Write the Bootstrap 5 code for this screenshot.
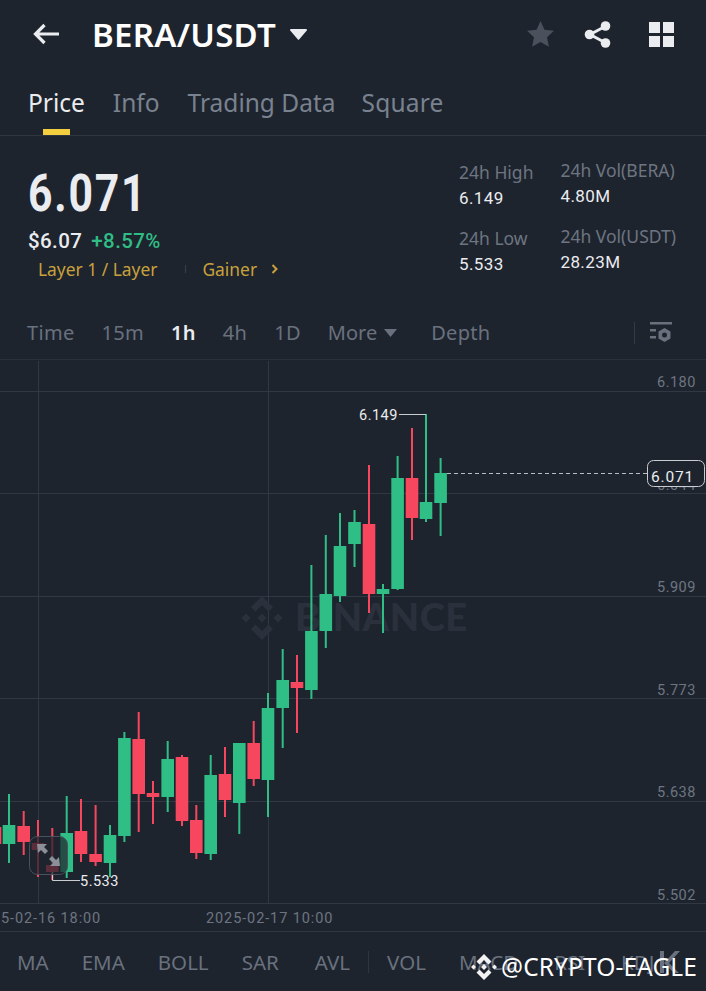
<!DOCTYPE html>
<html lang="en">
<head>
  <meta charset="UTF-8">
  <meta name="viewport" content="width=device-width, initial-scale=1.0">
  <title>BERA/USDT</title>
  <link href="https://cdn.jsdelivr.net/npm/bootstrap@5.3.0/dist/css/bootstrap.min.css" rel="stylesheet">
  <style>
    body { background: #1e242e; font-family: "Noto Sans", sans-serif; color: #eaecef; }
    .screen { position: relative; width: 706px; height: 991px; overflow: hidden; background: #1e242e; }
    .top-bar { height: 70px; padding: 0 32px 2px 33px; }
    .pair-name { font-size: 33px; font-weight: 600; line-height: 1; margin-left: 32px; color: #fff; letter-spacing: .3px; }
    .pair-caret { margin-left: 14px; }
    .top-icons { gap: 0; }
    .share-ico { margin: 0 38px 0 30px; }
    .tab-bar { height: 66px; gap: 28px; padding: 0 28px 0; border-bottom: 1px solid #2f3640; font-size: 24.5px; color: #79828f; }
    .tab-item { position: relative; line-height: 66px; }
    .tab-item:last-child { margin-left: -2px; letter-spacing: .2px; }
    .tab-item.on { color: #eaecef; }
    .tab-item.on::after { content: ""; position: absolute; left: 15px; bottom: 0; width: 27px; height: 6px; background: #f3cf3f; }
    .stats { height: 159px; padding: 0 28px; }
    .big-price { font-family: Roboto, sans-serif; font-size: 52px; font-weight: 700; line-height: 1; letter-spacing: 2.2px; margin-top: 32px; color: #eaecef; transform: scaleX(.82); transform-origin: left center; }
    .sub-price { font-family: Roboto, sans-serif; font-size: 20.5px; font-weight: 500; line-height: 24px; margin-top: 9px; letter-spacing: .4px; }
    .up-text { color: #2fbd85; margin-left: 9px; }
    .tag-row { font-size: 17.4px; line-height: 22px; color: #c8a13c; margin-left: 10px; margin-top: 5px; }
    .tag-sep { width: 1px; height: 8px; background: #3a4048; margin: 0 16px 0 28px; }
    .arrow-tag { margin-left: 14px; }
    .stat-cols { width: 219px; gap: 27px; margin-top: 21px; margin-left: auto; }
    .stat-label { font-size: 17.5px; line-height: 26px; color: #6d7581; }
    .stat-value { font-family: Roboto, sans-serif; font-size: 17px; line-height: 26px; font-weight: 400; margin-bottom: 14px; letter-spacing: .4px; }
    .shift-down { padding-top: 2px; }
    .time-bar { height: 65px; padding: 12px 34px 0 27px; border-bottom: 1px solid #2a303a; font-size: 20px; color: #69717e; letter-spacing: .3px; }
    .time-bar span.on { color: #eaecef; font-weight: 600; }
    .bar-sep { width: 1px; height: 22px; background: #343b45; margin-left: auto; margin-right: -12px; }
    .more-label { letter-spacing: 0; }
    .more-caret { margin-left: -1px; }
    .depth-label { margin-left: 7px; }
    .chart-box { display: block; }
    .axis-txt { font-family: Roboto, sans-serif; font-size: 14.5px; fill: #6d7581; letter-spacing: .5px; }
    .date-txt { letter-spacing: .9px; }
    .mark-txt { font-family: Roboto, sans-serif; font-size: 14.5px; fill: #eaecef; letter-spacing: .5px; }
    .last-txt { font-size: 15.5px; letter-spacing: .8px; }
    .brand-mark { font-family: Lato, sans-serif; font-weight: 900; font-size: 38px; fill: #2b313c; letter-spacing: .5px; }
    .ind-bar { height: 60px; padding: 1px 0 0 17px; gap: 33px; border-top: 1px solid #2f3640; font-size: 20.5px; color: #69717e; }
    .ind-sep { width: 1px; height: 22px; background: #2f3640; margin: 0 -15px; }
    .nudge { margin-left: 3px; }
    .kline-ico { margin-left: -27px; }
    .credit { position: absolute; left: 470px; top: 950px; color: #fff; font-family: "Noto Sans", sans-serif; font-size: 24.5px; line-height: 34px; letter-spacing: .1px; }
    .credit svg { margin-right: 3px; }
  </style>
</head>
<body>
  <div class="screen">
    <div class="top-bar d-flex align-items-center">
      <svg width="27" height="22" viewBox="0 0 27 22"><path d="M26 11H3M11.500 2 2.500 11l9 9" fill="none" stroke="#eaecef" stroke-width="3.200"/></svg>
      <span class="pair-name">BERA/USDT</span>
      <svg class="pair-caret" width="17" height="11" viewBox="0 0 17 11"><path d="M1 0h15a1 1 0 0 1 .8 1.600L9.300 10.300a1 1 0 0 1-1.600 0L.2 1.600A1 1 0 0 1 1 0z" fill="#eaecef"/></svg>
      <div class="ms-auto d-flex align-items-center top-icons">
        <svg width="27" height="26" viewBox="0 0 27 26"><path d="M13.500 0l4 8.700 9.500 1.100-7 6.500 1.900 9.400-8.400-4.700-8.400 4.700L7 16.300 0 9.800l9.500-1.100z" fill="#4a505c"/></svg>
        <svg class="share-ico" width="27" height="27" viewBox="0 0 27 27"><path d="M21 5.500 6 13.500l15 8" fill="none" stroke="#eaecef" stroke-width="3"/><circle cx="21.500" cy="5" r="4.800" fill="#eaecef"/><circle cx="5.500" cy="13.500" r="4.800" fill="#eaecef"/><circle cx="21.500" cy="22" r="4.800" fill="#eaecef"/></svg>
        <svg width="25" height="25" viewBox="0 0 25 25" fill="#eaecef"><rect width="11" height="11"/><rect x="14" width="11" height="11"/><rect y="14" width="11" height="11"/><rect x="14" y="14" width="11" height="11"/></svg>
      </div>
    </div>

    <div class="tab-bar d-flex">
      <span class="tab-item on">Price</span>
      <span class="tab-item">Info</span>
      <span class="tab-item">Trading Data</span>
      <span class="tab-item">Square</span>
    </div>

    <div class="stats d-flex">
      <div>
        <div class="big-price">6.071</div>
        <div class="sub-price">$6.07<span class="up-text">+8.57%</span></div>
        <div class="tag-row d-flex align-items-center">
          <span>Layer 1 / Layer</span>
          <span class="tag-sep"></span>
          <span>Gainer</span>
          <svg class="arrow-tag" width="7" height="10" viewBox="0 0 7 10"><path d="M1.500 1l4 4-4 4" fill="none" stroke="#c8a13c" stroke-width="2"/></svg>
        </div>
      </div>
      <div class="stat-cols d-flex">
        <div class="shift-down">
          <div class="stat-label">24h High</div>
          <div class="stat-value">6.149</div>
          <div class="stat-label">24h Low</div>
          <div class="stat-value">5.533</div>
        </div>
        <div>
          <div class="stat-label">24h Vol(BERA)</div>
          <div class="stat-value">4.80M</div>
          <div class="stat-label">24h Vol(USDT)</div>
          <div class="stat-value">28.23M</div>
        </div>
      </div>
    </div>

    <div class="time-bar d-flex align-items-center" style="gap: 27px">
      <span>Time</span><span>15m</span><span class="on">1h</span><span>4h</span><span>1D</span>
      <span class="d-flex align-items-center gap-2 more-label">More <svg class="more-caret" width="13" height="8" viewBox="0 0 13 8"><path d="M0 0h13L6.500 8z" fill="#69717e"/></svg></span>
      <span class="depth-label">Depth</span>
      <span class="bar-sep"></span>
      <svg width="22" height="22" viewBox="0 0 22 22" fill="#69717e"><rect width="22" height="2.500"/><rect y="7" width="6" height="2.500"/><rect y="14" width="6" height="2.500"/><path d="M14.500 6l6 3.500v7l-6 3.500-6-3.500v-7zM14.500 10.500a2.500 2.500 0 1 0 0 5 2.500 2.500 0 0 0 0-5z" fill-rule="evenodd"/></svg>
    </div>

    <svg id="chart" class="chart-box" width="706" height="571" viewBox="0 360 706 571"></svg>

    <div class="ind-bar d-flex align-items-center">
      <span>MA</span><span>EMA</span><span>BOLL</span><span>SAR</span><span class="nudge">AVL</span>
      <span class="ind-sep"></span>
      <span>VOL</span><span>MACD</span><span class="nudge">RSI</span><span class="nudge">KDJ</span>
      <svg class="kline-ico" width="20" height="22" viewBox="0 0 20 22" fill="#69717e"><path d="M0 0h4v22H0zM4 12 15 0h5L9 12l10 10h-5z"/></svg>
    </div>

    <div class="credit d-flex align-items-center">
      <svg width="28" height="28" viewBox="0 0 28 28" fill="#f2f2f2"><path d="M14 1l7.500 7.500-3 3L14 7 9.500 11.500l-3-3zM14 27l-7.500-7.500 3-3L14 21l4.500-4.500 3 3zM3.500 11.500 6 14l-2.500 2.500L1 14zM24.500 11.500 27 14l-2.500 2.500L22 14zM14 11l3 3-3 3-3-3z"/></svg>
      <span>@CRYPTO-EAGLE</span>
    </div>
  </div>

  <script src="https://cdn.jsdelivr.net/npm/bootstrap@5.3.0/dist/js/bootstrap.bundle.min.js"></script>
  <script>
    // x, wick top, wick bottom, body top, body bottom, up?
    const candles = [
      [-5, 815, 850, 827, 844, 0],
      [9, 794, 863, 825, 844, 1],
      [23.7, 811, 855, 826, 842, 0],
      [38, 820, 877, 843, 850, 0],
      [52.3, 828, 880, 865, 872, 0],
      [66.7, 796, 878, 833, 872, 1],
      [81, 799, 862, 831, 854, 0],
      [95.6, 805, 866, 854, 862, 0],
      [110, 825, 877, 835, 863, 1],
      [124.4, 732, 842, 738, 836, 1],
      [138.7, 712, 832, 739, 794, 0],
      [153, 781, 824, 793, 797, 0],
      [167.7, 741, 812, 759, 797, 1],
      [182, 755, 826, 757, 821, 0],
      [196.3, 805, 859, 820, 853, 0],
      [210.7, 755, 860, 775, 854, 1],
      [225, 747, 817, 774, 800, 0],
      [239.3, 743, 834, 743, 803, 1],
      [253.7, 721, 786, 743, 779, 0],
      [268, 693, 817, 708, 780, 1],
      [282.7, 649, 748, 680, 708, 1],
      [297, 655, 733, 682, 688, 0],
      [311.4, 565, 699, 631, 690, 1],
      [325.8, 535, 648, 594, 631, 1],
      [340, 513, 602, 546, 596, 1],
      [354.5, 510, 567, 522, 544, 1],
      [369, 465, 613, 524, 594, 0],
      [383, 584, 633, 589, 594, 1],
      [397.6, 456, 590, 478, 589, 1],
      [412, 428, 540, 478, 518, 0],
      [426, 414, 522, 502, 519, 1],
      [440.6, 458, 536, 473, 503, 1]
    ];

    let out = '';
    [391, 493, 596, 698, 801, 903].forEach(y => {
      out += `<line x1="0" x2="706" y1="${y}.5" y2="${y}.5" stroke="#323843"/>`;
    });
    [38, 268].forEach(x => {
      out += `<line x1="${x}.5" x2="${x}.5" y1="361" y2="903" stroke="#323843"/>`;
    });

    // watermark
    out += `<g fill="#2b313c"><path d="M262 596l11 11-4.500 4.500-6.500-6.500-6.500 6.500-4.500-4.500zM262 640l-11-11 4.500-4.500 6.500 6.500 6.500-6.500 4.500 4.500zM246 613.500l4.500 4.500-4.500 4.500-4.500-4.500zM278 613.500l4.500 4.500-4.500 4.500-4.500-4.500zM262 613.500l4.500 4.500-4.500 4.500-4.500-4.500z"/></g>`;
    out += `<text class="brand-mark" x="295" y="631">BINANCE</text>`;

    [['6.180', 387], ['6.044', 490], ['5.909', 592], ['5.773', 695], ['5.638', 797], ['5.502', 900]].forEach(a => {
      out += `<text class="axis-txt" x="657" y="${a[1]}">${a[0]}</text>`;
    });
    out += `<text class="axis-txt date-txt" x="1" y="923">5-02-16 18:00</text><text class="axis-txt date-txt" x="206" y="923">2025-02-17 10:00</text>`;

    candles.forEach(c => {
      const col = c[5] ? '#2fbf86' : '#f6475f';
      out += `<rect x="${c[0] - 1}" y="${c[1]}" width="2" height="${c[2] - c[1]}" fill="${col}"/>`;
      out += `<rect x="${c[0] - 6.3}" y="${c[3]}" width="12.6" height="${c[4] - c[3]}" fill="${col}"/>`;
    });

    // high / low marks
    out += `<path d="M399 414.500H426" stroke="#c9ccd0" fill="none"/><text class="mark-txt" x="359" y="420">6.149</text>`;
    out += `<path d="M52.500 872V880.500H80" stroke="#c9ccd0" fill="none"/><text class="mark-txt" x="80" y="886">5.533</text>`;

    // last price
    out += `<line x1="447" x2="647" y1="473.500" y2="473.500" stroke="#b8bcc2" stroke-dasharray="4 3"/>`;
    out += `<rect x="647.500" y="460.500" width="57" height="26" rx="6" fill="#1e242e" stroke="#c9ccd0"/>`;
    out += `<text class="mark-txt last-txt" x="651" y="482">6.071</text>`;

    // expand button floating on the candles
    out += `<rect x="29.500" y="836.500" width="38" height="38" rx="8" fill="#1e242e" fill-opacity=".72" stroke="#4a505c"/>`;
    out += `<path d="M37 844h10l-3 3 4 4-3 3-4-4-3 3zM60 866H50l3-3-4-4 3-3 4 4 3-3z" fill="#8b9099"/>`;

    document.getElementById('chart').innerHTML = out;
  </script>
</body>
</html>
